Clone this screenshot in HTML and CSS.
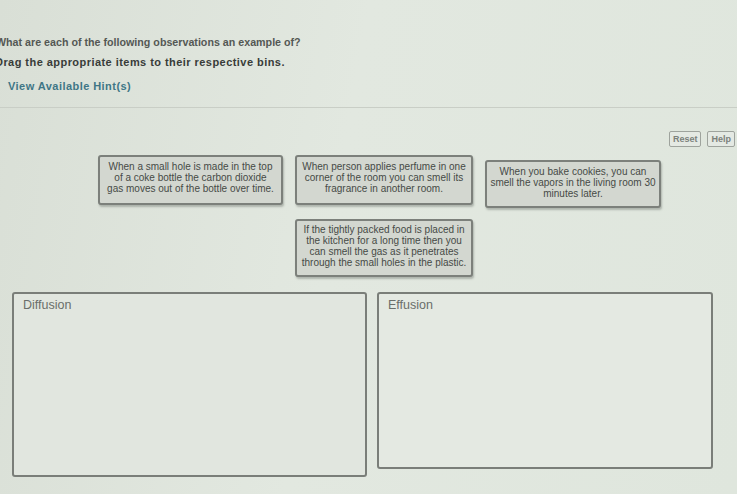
FILE: index.html
```html
<!DOCTYPE html>
<html>
<head>
  <link rel="stylesheet" href="styles.css">
</head>
<body>
  <div class="page">
    <div class="question">
      <p class="prompt">What are each of the following observations an example of?</p>
      <p class="instructions">Drag the appropriate items to their respective bins.</p>
      <a class="hint" href="#">View Available Hint(s)</a>
    </div>

    <div class="workspace">
      <div class="toolbar">
        <button class="tool-btn">Reset</button>
        <button class="tool-btn">Help</button>
      </div>

      <div class="items">
        <div class="item item-1">When a small hole is made in the top of a coke bottle the carbon dioxide gas moves out of the bottle over time.</div>
        <div class="item item-2">When person applies perfume in one corner of the room you can smell its fragrance in another room.</div>
        <div class="item item-3">When you bake cookies, you can smell the vapors in the living room 30 minutes later.</div>
        <div class="item item-4">If the tightly packed food is placed in the kitchen for a long time then you can smell the gas as it penetrates through the small holes in the plastic.</div>
      </div>

      <div class="bins">
        <div class="bin bin-left"><span class="bin-label">Diffusion</span></div>
        <div class="bin bin-right"><span class="bin-label">Effusion</span></div>
      </div>
    </div>
  </div>
</body>
</html>
```

FILE: styles.css
```css
html, body {
  margin: 0;
  padding: 0;
}
body {
  width: 737px;
  height: 494px;
  overflow: hidden;
  font-family: "Liberation Sans", Arial, sans-serif;
  background: linear-gradient(100deg, #d9dfd6 0%, #e2e8e0 45%, #dfe6dd 100%);
}

.question {
  padding-top: 35px;
  height: 72px;
  border-bottom: 1px solid #c9cec6;
}
.prompt {
  margin: 0 0 0 -4px;
  font-size: 10.7px;
  font-weight: bold;
  color: #545854;
  line-height: 14px;
}
.instructions {
  margin: 6px 0 0 -5px;
  font-size: 11px;
  font-weight: bold;
  letter-spacing: 0.45px;
  color: #383c39;
  line-height: 14px;
}
.hint {
  display: inline-block;
  margin: 10px 0 0 8px;
  font-size: 11px;
  font-weight: bold;
  letter-spacing: 0.45px;
  color: #3f7686;
  text-decoration: none;
  line-height: 14px;
}

.toolbar {
  display: flex;
  justify-content: flex-end;
  gap: 6px;
  padding: 23px 2px 0 0;
}
.tool-btn {
  font-family: "Liberation Sans", Arial, sans-serif;
  font-size: 9px;
  font-weight: bold;
  color: #7b807b;
  background: #e4e9e3;
  border: 1px solid #9ea39d;
  border-radius: 2px;
  padding: 2px 3px;
  height: 16px;
  line-height: 10px;
}

.items {
  display: grid;
  grid-template-columns: 185px 178px 176px;
  column-gap: 12px;
  row-gap: 11px;
  margin: 8px 0 0 98px;
}
.item {
  box-sizing: border-box;
  background: #d3d7d0;
  border: 2px solid #7c807b;
  border-radius: 3px;
  box-shadow: 1px 2px 2px rgba(80, 85, 80, 0.35);
  color: #464a46;
  font-size: 10px;
  line-height: 11px;
  text-align: center;
  padding: 4px 6px;
  height: 50px;
}
.item-2 {
  padding: 4px 2px;
}
.item-3 {
  margin-top: 5px;
  height: 48px;
  padding: 4px 3px;
}
.item-4 {
  grid-column: 2;
  height: 58px;
  padding: 3px 3px;
}

.bins {
  display: flex;
  gap: 10px;
  margin: 15px 0 0 12px;
}
.bin {
  box-sizing: border-box;
  border: 2px solid #7a7e79;
  border-radius: 3px;
  padding: 1px 9px;
}
.bin-left {
  width: 355px;
  height: 185px;
  background: #e1e6df;
}
.bin-right {
  width: 336px;
  height: 177px;
  background: #e4e9e2;
}
.bin-label {
  font-size: 12.5px;
  color: #6a6e6a;
}
```
